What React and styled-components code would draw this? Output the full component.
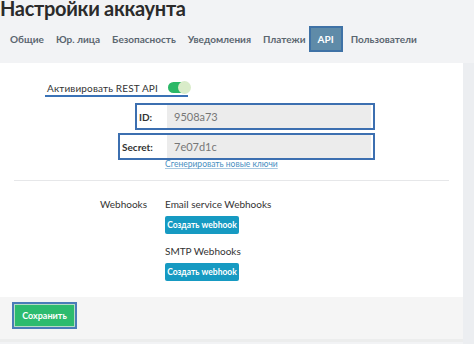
import React from 'react';
import styled, { createGlobalStyle } from 'styled-components';

const GlobalStyle = createGlobalStyle`
	html, body {
		margin: 0;
		padding: 0;
		background: #f2f3f5;
		font-family: Lato, "Open Sans", sans-serif;
		overflow: hidden;
	}
`;

const tabs = ['Общие', 'Юр. лица', 'Безопасность', 'Уведомления', 'Платежи', 'API', 'Пользователи'];

export default function App() {
	return (
		<Page>
			<GlobalStyle />
			<Title>Настройки аккаунта</Title>
			<Tabs>
				{tabs.map((t) => (
					<Tab key={t} active={t === 'API'}>{t}</Tab>
				))}
			</Tabs>
			<Layout>
				<Main>
					<Card>
						<ToggleRow>
							<ToggleLabel>Активировать REST API</ToggleLabel>
							<Toggle />
						</ToggleRow>
						<FieldBox offset={135} gap={6}>
							<FieldLabel width={30}>ID:</FieldLabel>
							<Input value="9508a73" readOnly />
						</FieldBox>
						<FieldBox offset={118} gap={3}>
							<FieldLabel width={47}>Secret:</FieldLabel>
							<Input value="7e07d1c" readOnly />
						</FieldBox>
						<LinkRow>
							<Link href="#">Сгенерировать новые ключи</Link>
						</LinkRow>
						<Divider />
						<HookGrid>
							<HookLabel>Webhooks</HookLabel>
							<HookList>
								<HookTitle>Email service Webhooks</HookTitle>
								<HookButton>Создать webhook</HookButton>
								<HookTitle>SMTP Webhooks</HookTitle>
								<HookButton>Создать webhook</HookButton>
							</HookList>
						</HookGrid>
					</Card>
					<Footer>
						<SaveButton>Сохранить</SaveButton>
					</Footer>
				</Main>
				<Side />
			</Layout>
		</Page>
	);
}

const Page = styled.div`
	width: 474px;
	height: 344px;
	overflow: hidden;
`;

const Title = styled.h1`
	margin: -4px 0 0 0;
	font-size: 20px;
	line-height: 24px;
	font-weight: 700;
	color: #2b2b2b;
	letter-spacing: -0.3px;
`;

const Tabs = styled.div`
	display: flex;
	align-items: center;
	padding: 6px 0 0 4px;
	height: 26px;
`;

const Tab = styled.div`
	font-size: 10px;
	font-weight: 700;
	color: ${p => (p.active ? '#fff' : '#5b6670')};
	padding: ${p => (p.active ? '4px 7px' : '4px 6px')};
	margin: ${p => (p.active ? '0 2px 0 -3px' : '0')};
	background: ${p => (p.active ? '#5f8ba8' : 'transparent')};
	border: ${p => (p.active ? '2px solid #3f72a6' : 'none')};
	line-height: 14px;
`;

const Layout = styled.div`
	display: flex;
	margin-top: 11px;
`;

const Main = styled.div`
	width: 463px;
	display: flex;
	flex-direction: column;
`;

const Side = styled.div`
	flex: 1;
	background: #eceef1;
	height: 300px;
`;

const Card = styled.div`
	background: #fff;
	height: 234px;
	padding-top: 18px;
	box-sizing: border-box;
`;

const ToggleRow = styled.div`
	display: flex;
	align-items: center;
	margin-left: 45px;
	width: 143px;
	height: 13px;
	padding-bottom: 1px;
	border-bottom: 2px solid #3a72b6;
`;

const ToggleLabel = styled.span`
	font-size: 10px;
	letter-spacing: 0.15px;
	color: #333;
	padding-left: 2px;
	width: 121px;
	flex-shrink: 0;
	white-space: nowrap;
`;

const Toggle = styled.span`
	width: 22px;
	height: 11px;
	border-radius: 6px;
	background: #2bb867;
	position: relative;
	flex-shrink: 0;
	&::after {
		content: '';
		position: absolute;
		right: -1px;
		top: -1px;
		width: 13px;
		height: 13px;
		border-radius: 50%;
		background: #d9ecc9;
	}
`;

const FieldBox = styled.div`
	display: flex;
	align-items: center;
	margin-left: ${p => p.offset}px;
	width: ${p => 240 - (p.offset - 135)}px;
	height: 27px;
	margin-top: ${p => p.gap}px;
	border: 2px solid #3c6fb0;
	box-sizing: border-box;
	padding-right: 2px;
`;

const FieldLabel = styled.span`
	width: ${p => p.width - 2}px;
	padding-left: 2px;
	font-size: 10px;
	font-weight: 700;
	color: #333;
	flex-shrink: 0;
`;

const Input = styled.input`
	flex: 1;
	height: 23px;
	border: none;
	background: #ececec;
	font-family: Lato, sans-serif;
	font-size: 11px;
	color: #777;
	padding: 0 7px;
	box-sizing: border-box;
	outline: none;
	min-width: 0;
`;

const LinkRow = styled.div`
	padding-left: 165px;
	margin-top: -4px;
	line-height: 10px;
`;

const Link = styled.a`
	font-size: 8.5px;
	color: #4a90c2;
	text-decoration: underline;
	text-decoration-color: #a8c8e0;
`;

const Divider = styled.div`
	margin: 11px 14px 0 14px;
	height: 1px;
	background: #e6e7e9;
`;

const HookGrid = styled.div`
	display: grid;
	grid-template-columns: 165px 1fr;
	margin-top: 16px;
`;

const HookLabel = styled.div`
	font-size: 10px;
	color: #333;
	text-align: right;
	padding-right: 18px;
	line-height: 14px;
`;

const HookList = styled.div`
	display: flex;
	flex-direction: column;
	align-items: flex-start;
`;

const HookTitle = styled.div`
	font-size: 10px;
	color: #333;
	line-height: 14px;
	margin-bottom: 5px;
`;

const HookButton = styled.button`
	width: 74px;
	height: 18px;
	border: none;
	border-radius: 2px;
	background: #169ac2;
	color: #fff;
	font-family: Lato, sans-serif;
	font-size: 8.5px;
	font-weight: 700;
	padding: 0;
	margin-bottom: 10px;
`;

const Footer = styled.div`
	background: #f5f5f5;
	height: 37px;
	padding: 5px 0 0 12px;
	border-bottom: 3px solid #eceded;
`;

const SaveButton = styled.button`
	width: 65px;
	height: 27px;
	border: 2px solid #4a7cb8;
	background: #2dbb6e;
	color: #fff;
	font-family: Lato, sans-serif;
	font-size: 9px;
	font-weight: 700;
	padding: 0;
	box-shadow: inset 0 0 0 1px #b5dcc4;
`;
